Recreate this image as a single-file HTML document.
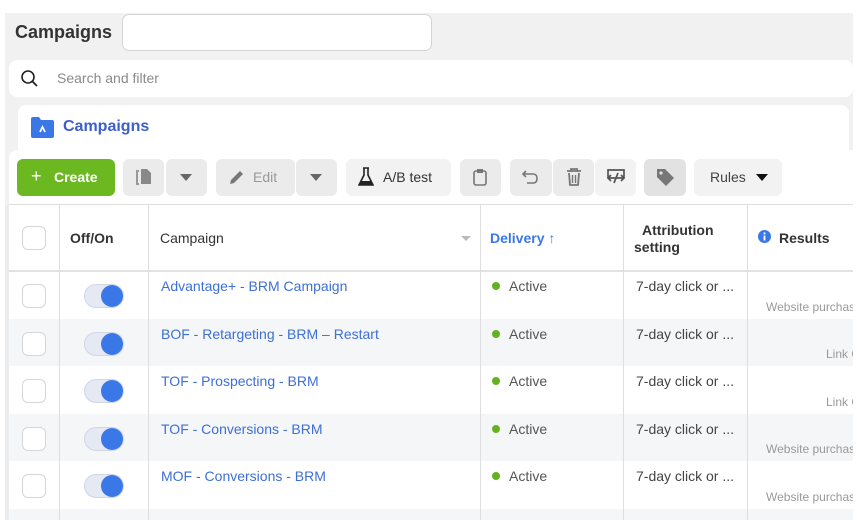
<!DOCTYPE html>
<html><head><style>
*{box-sizing:border-box;margin:0;padding:0}
body{width:857px;height:520px;background:#fff;font-family:"Liberation Sans",sans-serif;position:relative;overflow:hidden;color:#1c1e21}
.a{position:absolute;white-space:nowrap}
.btn{position:absolute;top:159px;height:37px;background:#ebebeb;border-radius:6px}
.cell{position:absolute;font-size:14px;white-space:nowrap}
.cb{position:absolute;left:22px;width:24px;height:24px;border:1px solid #d6d6d6;border-radius:6px;background:#fff}
.tg{position:absolute;left:84px;width:40px;height:24px;border-radius:12px;background:#e4e9f4;border:1px solid #cfd6e4}
.tg:after{content:"";position:absolute;right:0;top:0;width:22px;height:22px;border-radius:50%;background:#3b78e7}
.lnk{position:absolute;left:161px;color:#3d6fd6;font-size:14px;white-space:nowrap}
.dot{position:absolute;left:492px;width:8px;height:8px;border-radius:50%;background:#63b320}
.act{position:absolute;left:509px;font-size:14px;color:#555}
.att{position:absolute;left:636px;font-size:14px;color:#444;white-space:nowrap}
.res{position:absolute;font-size:12px;color:#999;white-space:nowrap}
.vl{position:absolute;top:205px;width:1px;height:315px;background:#dedede}
</style></head><body>
<div class="a" style="left:5px;top:13px;width:848px;height:507px;background:#f1f1f1"></div>
<div class="a" style="left:15px;top:22px;font-size:18px;font-weight:bold;color:#333">Campaigns</div>
<div class="a" style="left:122px;top:14px;width:310px;height:37px;background:#fff;border:1px solid #d4d4d4;border-radius:7px"></div>
<div class="a" style="left:9px;top:60px;width:844px;height:37px;background:#fff;border-radius:8px"></div>
<svg class="a" style="left:20px;top:69px" width="20" height="20" viewBox="0 0 20 20"><circle cx="8" cy="8" r="6" fill="none" stroke="#222" stroke-width="1.6"/><path d="M12.5 12.5L17 17" stroke="#222" stroke-width="1.8"/></svg>
<div class="a" style="left:57px;top:70px;font-size:14px;color:#8a8a8a">Search and filter</div>
<div class="a" style="left:18px;top:105px;width:831px;height:60px;background:#fff;border-radius:8px 8px 0 0"></div>
<div class="a" style="left:9px;top:150px;width:844px;height:370px;background:#fff;border-radius:8px 0 0 0"></div>
<svg class="a" style="left:31px;top:117px" width="23" height="21" viewBox="0 0 23 21"><path d="M0 2Q0 0 2 0H8L10 3H21Q23 3 23 5V19Q23 21 21 21H2Q0 21 0 19Z" fill="#3b78e7"/><path d="M9 15L11.5 10L14 15" fill="none" stroke="#fff" stroke-width="1.8"/></svg>
<div class="a" style="left:63px;top:118px;font-size:16px;font-weight:bold;color:#3d5fc9">Campaigns</div>
<!-- toolbar -->
<div class="btn" style="left:17px;width:98px;background:#6cb821"></div>
<div class="a" style="left:31px;top:167px;font-size:18px;color:#fff;line-height:18px">+</div>
<div class="a" style="left:54px;top:169px;font-size:14px;font-weight:bold;color:#fff">Create</div>
<div class="btn" style="left:123px;width:41px"></div><div class="btn" style="left:166px;width:41px"></div>
<svg class="a" style="left:134px;top:167px" width="20" height="20" viewBox="0 0 20 20"><path d="M5 4H3V17H5" fill="none" stroke="#999" stroke-width="2"/><path d="M7 2H13L17 6V17H7Z" fill="#888"/></svg>
<svg class="a" style="left:180px;top:174px" width="12" height="7"><path d="M0 0H12L6 7Z" fill="#666"/></svg>
<div class="btn" style="left:216px;width:79px"></div><div class="btn" style="left:296px;width:41px"></div>
<svg class="a" style="left:228px;top:168px" width="18" height="18" viewBox="0 0 18 18"><path d="M2 16L3 12L12 3L15 6L6 15Z" fill="#777"/></svg>
<div class="a" style="left:253px;top:169px;font-size:14px;color:#999">Edit</div>
<svg class="a" style="left:310px;top:174px" width="12" height="7"><path d="M0 0H12L6 7Z" fill="#666"/></svg>
<div class="btn" style="left:346px;width:105px;background:#f2f2f2"></div>
<svg class="a" style="left:358px;top:167px" width="16" height="20" viewBox="0 0 16 20"><path d="M5 1H11M6 1V8L1 18H15L10 8V1" fill="none" stroke="#222" stroke-width="1.6"/><path d="M3 14H13L15 18H1Z" fill="#222"/></svg>
<div class="a" style="left:383px;top:169px;font-size:14px;color:#333">A/B test</div>
<div class="btn" style="left:460px;width:41px"></div>
<svg class="a" style="left:472px;top:167px" width="16" height="20" viewBox="0 0 16 20"><rect x="2" y="4" width="12" height="14" rx="2" fill="none" stroke="#777" stroke-width="1.6"/><rect x="5" y="2" width="6" height="4" fill="#777"/></svg>
<div class="btn" style="left:510px;width:42px"></div><div class="btn" style="left:553px;width:41px"></div><div class="btn" style="left:595px;width:41px;background:#f2f2f2"></div><div class="btn" style="left:644px;width:42px;background:#e2e2e2"></div>
<svg class="a" style="left:521px;top:168px" width="20" height="18" viewBox="0 0 20 18"><path d="M5 3L2 6L5 9M2 6H12Q16 6 16 10.5Q16 15 12 15H6" fill="none" stroke="#777" stroke-width="1.6"/></svg>
<svg class="a" style="left:565px;top:167px" width="18" height="20" viewBox="0 0 18 20"><path d="M2 4H16M6 4V2H12V4M4 6L5 18H13L14 6" fill="none" stroke="#777" stroke-width="1.8"/><path d="M7.5 8V16M10.5 8V16" stroke="#777" stroke-width="1.4"/></svg>
<svg class="a" style="left:606px;top:167px" width="20" height="20" viewBox="0 0 20 20"><path d="M2 11V3H18V11M5 8L2 11L5 14M15 8L18 11L15 14M2 11H18M8 16L12 6" fill="none" stroke="#555" stroke-width="1.7"/></svg>
<svg class="a" style="left:655px;top:167px" width="20" height="20" viewBox="0 0 20 20"><path d="M2 2H10L19 11L11 19L2 10Z" fill="#777"/><circle cx="6" cy="6" r="1.6" fill="#e2e2e2"/></svg>
<div class="btn" style="left:694px;width:88px;background:#f2f2f2"></div>
<div class="a" style="left:710px;top:169px;font-size:14px;color:#444">Rules</div>
<svg class="a" style="left:756px;top:174px" width="12" height="7"><path d="M0 0H12L6 7Z" fill="#111"/></svg>
<!-- table -->
<div class="a" style="left:9px;top:204px;width:844px;height:1px;background:#dedede"></div>
<div class="a" style="left:9px;top:270px;width:844px;height:2px;background:#e2e2e2"></div>
<div class="a" style="left:9px;top:319px;width:844px;height:47px;background:#f5f6f7"></div>
<div class="a" style="left:9px;top:414px;width:844px;height:47px;background:#f5f6f7"></div>
<div class="a" style="left:9px;top:509px;width:844px;height:11px;background:#f5f6f7"></div>
<div class="a" style="left:5px;top:205px;width:4px;height:315px;background:#ececec"></div>
<div class="vl" style="left:59px"></div><div class="vl" style="left:148px"></div><div class="vl" style="left:480px"></div><div class="vl" style="left:623px"></div><div class="vl" style="left:747px"></div>
<div class="cb" style="top:226px"></div>
<div class="cell" style="left:70px;top:230px;font-weight:bold;color:#333">Off/On</div>
<div class="cell" style="left:160px;top:230px;color:#333">Campaign</div>
<svg class="a" style="left:461px;top:236px" width="10" height="5"><path d="M0 0H10L5 5Z" fill="#bbb"/></svg>
<div class="cell" style="left:490px;top:230px;font-weight:bold;color:#3b78e7">Delivery ↑</div>
<div class="cell" style="left:642px;top:222px;font-weight:bold;color:#333">Attribution</div>
<div class="cell" style="left:634px;top:239px;font-weight:bold;color:#333">setting</div>
<svg class="a" style="left:758px;top:230px" width="13" height="13"><circle cx="6.5" cy="6.5" r="6.5" fill="#3b78e7"/><rect x="5.6" y="5.5" width="1.8" height="5" fill="#fff"/><rect x="5.6" y="2.5" width="1.8" height="1.8" fill="#fff"/></svg>
<div class="cell" style="left:779px;top:230px;font-weight:bold;color:#333">Results</div>

<div class="cb" style="top:284px"></div><div class="tg" style="top:284px"></div>
<div class="lnk" style="top:278px">Advantage+ - BRM Campaign</div>
<div class="dot" style="top:282px"></div><div class="act" style="top:278px">Active</div><div class="att" style="top:278px">7-day click or ...</div>
<div class="res" style="left:766px;top:300px">Website purchases</div>

<div class="cb" style="top:332px"></div><div class="tg" style="top:332px"></div>
<div class="lnk" style="top:326px">BOF - Retargeting - BRM – Restart</div>
<div class="dot" style="top:330px"></div><div class="act" style="top:326px">Active</div><div class="att" style="top:326px">7-day click or ...</div>
<div class="res" style="left:826px;top:347px">Link Clicks</div>

<div class="cb" style="top:379px"></div><div class="tg" style="top:379px"></div>
<div class="lnk" style="top:373px">TOF - Prospecting - BRM</div>
<div class="dot" style="top:377px"></div><div class="act" style="top:373px">Active</div><div class="att" style="top:373px">7-day click or ...</div>
<div class="res" style="left:826px;top:395px">Link Clicks</div>

<div class="cb" style="top:427px"></div><div class="tg" style="top:427px"></div>
<div class="lnk" style="top:421px">TOF - Conversions - BRM</div>
<div class="dot" style="top:425px"></div><div class="act" style="top:421px">Active</div><div class="att" style="top:421px">7-day click or ...</div>
<div class="res" style="left:766px;top:442px">Website purchases</div>

<div class="cb" style="top:474px"></div><div class="tg" style="top:474px"></div>
<div class="lnk" style="top:468px">MOF - Conversions - BRM</div>
<div class="dot" style="top:472px"></div><div class="act" style="top:468px">Active</div><div class="att" style="top:468px">7-day click or ...</div>
<div class="res" style="left:766px;top:490px">Website purchases</div>
<div class="a" style="left:853px;top:0;width:4px;height:520px;background:#fff"></div>
</body></html>
